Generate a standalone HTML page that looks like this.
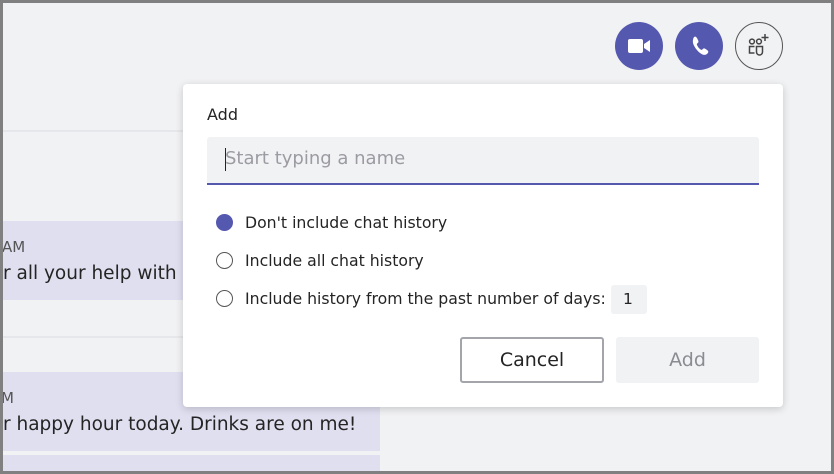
<!DOCTYPE html>
<html><head><style>
*{margin:0;padding:0;box-sizing:border-box}
body{width:834px;height:474px;overflow:hidden;font-family:"DejaVu Sans","Liberation Sans",sans-serif;color:#252424}
.frame{position:absolute;left:0;top:0;width:834px;height:474px;border:3px solid #808080;background:#f1f2f4;overflow:hidden}
.abs{position:absolute;white-space:nowrap}
.line{position:absolute;left:0;width:400px;height:2px;background:#e6e7ea}
.bub{position:absolute;left:0;width:377px;background:#dfdff0}
.circ{position:absolute;width:48px;height:48px;border-radius:50%;top:19px}
.pop{position:absolute;left:180px;top:81px;width:600px;height:323px;background:#fff;border-radius:4px;box-shadow:0 2px 8px rgba(0,0,0,.18)}
.radio{position:absolute;left:33px;width:17px;height:17px;border-radius:50%;border:1.5px solid #555}
.lbl{position:absolute;left:62px;font-size:15.7px;white-space:nowrap}
</style></head><body>
<div class="frame">
 <div class="line" style="top:127px"></div>
 <div class="bub" style="top:218px;height:79px"></div>
 <div class="abs" style="left:-1px;top:235px;font-size:15px;color:#555">AM</div>
 <div class="abs" style="left:0;top:260px;font-size:18.5px">r all your help with t</div>
 <div class="line" style="top:333px"></div>
 <div class="bub" style="top:369px;height:79px"></div>
 <div class="abs" style="left:-2px;top:386px;font-size:15px;color:#555">M</div>
 <div class="abs" style="left:0;top:411px;font-size:18.5px">r happy hour today. Drinks are on me!</div>
 <div class="bub" style="top:452px;height:30px"></div>

 <div class="circ" style="left:612px;background:#5558af">
  <svg width="48" height="48" viewBox="0 0 48 48"><rect x="13" y="17" width="15" height="14" rx="2" fill="#fff"/><path d="M29 22 L35 18 V30 L29 26Z" fill="#fff"/></svg>
 </div>
 <div class="circ" style="left:672px;background:#5558af">
  <svg width="48" height="48" viewBox="0 0 48 48"><path d="M19 15c1.5-1 2.5 0 3.3 1.6l1 2.2c.5 1.2 0 2-1 2.6-.6.4-.6 1 .0 2.2 1 2 2 3 3.5 4 .8.5 1.3.3 1.8-.3.8-1 1.7-1.2 2.8-.4l2 1.4c1.2.9 1.2 2 .2 3.1-1.3 1.5-3.4 2-5.6.8-3.3-1.8-6-4.8-8-8.6-1.7-3.2-1.3-6.3.0-8.6z" fill="#fff"/></svg>
 </div>
 <div class="circ" style="left:732px;border:1.3px solid #555;background:transparent">
  <svg width="46" height="46" viewBox="0 0 46 46" fill="none" stroke="#444" stroke-width="1.5"><circle cx="16" cy="18.5" r="2.4"/><circle cx="23" cy="18.5" r="2.4"/><path d="M18.5 23.5h-5v6.5h5"/><path d="M20.5 23.5h6v5.5a3 3 0 0 1-6 0z"/><path d="M29 11v7M25.5 14.5h7"/></svg>
 </div>

 <div class="pop">
  <div class="abs" style="left:24px;top:21px;font-size:16px">Add</div>
  <div class="abs" style="left:24px;top:53px;width:552px;height:48px;background:#f1f2f4;border-radius:3px 3px 0 0;border-bottom:2px solid #5558af">
   <div class="abs" style="left:18px;top:11px;width:1px;height:23px;background:#252424"></div>
   <div class="abs" style="left:18px;top:11px;font-size:18px;color:#9b9ba1">Start typing a name</div>
  </div>
  <div class="radio" style="top:130px;background:#5558af;border-color:#5558af"></div>
  <div class="lbl" style="top:129px">Don't include chat history</div>
  <div class="radio" style="top:168px"></div>
  <div class="lbl" style="top:167px">Include all chat history</div>
  <div class="radio" style="top:206px"></div>
  <div class="lbl" style="top:205px">Include history from the past number of days:</div>
  <div class="abs" style="left:428px;top:201px;width:36px;height:29px;background:#f1f2f4;border-radius:3px;font-size:15.5px;line-height:29px;padding-left:12px">1</div>
  <div class="abs" style="left:277px;top:253px;width:144px;height:46px;border:2px solid #a3a5ab;border-radius:3px;font-size:19px;text-align:center;line-height:42px">Cancel</div>
  <div class="abs" style="left:433px;top:253px;width:143px;height:46px;background:#f1f2f4;border-radius:3px;font-size:19px;text-align:center;line-height:46px;color:#8a8c92">Add</div>
 </div>
</div>
</body></html>
